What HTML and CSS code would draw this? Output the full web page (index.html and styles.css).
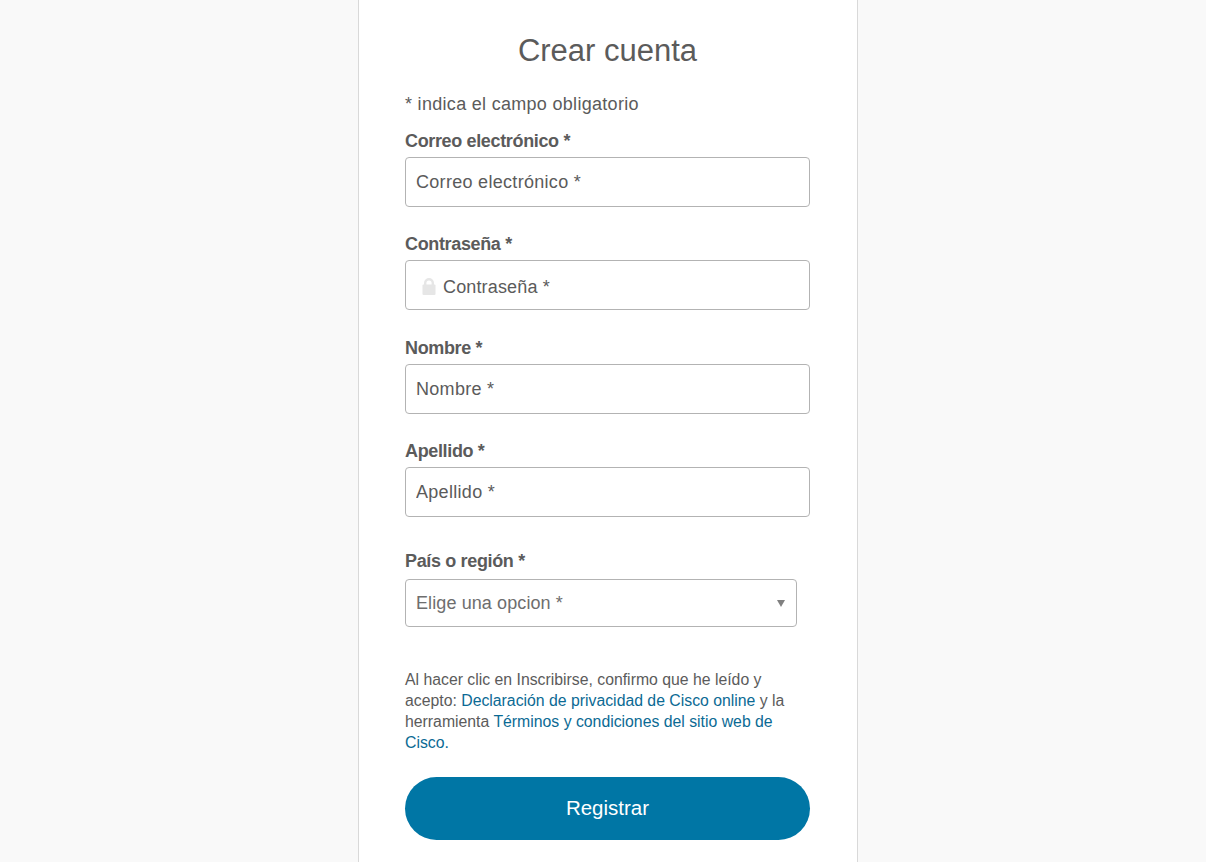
FILE: index.html
```html
<!DOCTYPE html>
<html lang="es">
<head>
    <meta charset="UTF-8">
    <meta name="viewport" content="width=device-width, initial-scale=1.0">
    <title>Crear cuenta</title>
    <link rel="stylesheet" href="styles.css">
</head>
<body>
    <main class="card">
        <h1 class="title">Crear cuenta</h1>
        <p class="hint">* indica el campo obligatorio</p>
        <form class="signup">
            <div class="field">
                <label class="label" for="email">Correo electrónico *</label>
                <input class="input" type="text" id="email" placeholder="Correo electrónico *">
            </div>
            <div class="field">
                <label class="label" for="password">Contraseña *</label>
                <div class="input-wrap">
                    <svg class="lock" width="14" height="17" viewBox="0 0 14 17" aria-hidden="true">
                        <path d="M3.2 7V5a3.8 3.8 0 0 1 7.6 0v2" fill="none" stroke="#e6e6e6" stroke-width="2.4"/>
                        <rect x="0.5" y="6.5" width="13" height="10.5" rx="1" fill="#e6e6e6"/>
                    </svg>
                    <input class="input input-lock" type="password" id="password" placeholder="Contraseña *">
                </div>
            </div>
            <div class="field">
                <label class="label" for="first">Nombre *</label>
                <input class="input input-low" type="text" id="first" placeholder="Nombre *">
            </div>
            <div class="field">
                <label class="label" for="last">Apellido *</label>
                <input class="input input-low" type="text" id="last" placeholder="Apellido *">
            </div>
            <div class="field field-country">
                <label class="label" for="country">País o región *</label>
                <div class="select-wrap">
                    <select class="select" id="country">
                        <option>Elige una opcion *</option>
                    </select>
                    <span class="arrow"></span>
                </div>
            </div>
            <p class="legal">Al hacer clic en Inscribirse, confirmo que he leído y acepto: <a href="#">Declaración de privacidad de Cisco online</a> y la herramienta <a href="#">Términos y condiciones del sitio web de Cisco.</a></p>
            <button class="submit" type="button">Registrar</button>
        </form>
    </main>
</body>
</html>
```

FILE: styles.css
```css
* {
    box-sizing: border-box;
}
html, body {
    height: 100%;
    overflow: hidden;
}
body {
    margin: 0;
    background-color: #f9f9f9;
    color: #5b5b5b;
    font-family: "Liberation Sans", Arial, sans-serif;
}
.card {
    width: 500px;
    height: 100%;
    margin-left: 358px;
    padding: 0 47px 0 46px;
    background-color: #fff;
    border-left: 1px solid #d9d9d9;
    border-right: 1px solid #d9d9d9;
}
.title {
    margin: 0;
    padding-top: 33px;
    font-size: 31px;
    line-height: 35px;
    font-weight: 400;
    text-align: center;
}
.hint {
    margin: 26px 0 0;
    font-size: 18px;
    line-height: 20px;
    letter-spacing: 0.3px;
}
.signup {
    margin-top: 17px;
}
.field {
    margin-bottom: 27.33px;
}
.label {
    display: block;
    font-size: 18px;
    font-weight: 700;
    line-height: 20px;
    letter-spacing: -0.35px;
    margin-bottom: 6px;
}
.input {
    display: block;
    width: 100%;
    height: 50px;
    padding: 0 10px;
    border: 1px solid #b3b3b3;
    border-radius: 4px;
    background-color: #fff;
    color: #5b5b5b;
    font-family: inherit;
    font-size: 18px;
    letter-spacing: 0.3px;
}
.input::placeholder {
    color: #5b5b5b;
    opacity: 1;
}
.input-low {
    padding-top: 2px;
}
.input-wrap, .select-wrap {
    position: relative;
}
.input-lock {
    padding-left: 37px;
    padding-top: 4px;
    letter-spacing: 0.15px;
}
.lock {
    position: absolute;
    left: 17px;
    top: 18px;
}
.field-country {
    margin-top: 34px;
    margin-bottom: 42px;
}
.field-country .label {
    margin-bottom: 8px;
}
.select-wrap {
    width: 392px;
}
.select {
    display: block;
    width: 100%;
    height: 48px;
    padding: 0 10px;
    border: 1px solid #b3b3b3;
    border-radius: 4px;
    background-color: #fff;
    color: #6e6e6e;
    font-family: inherit;
    font-size: 18px;
    letter-spacing: 0.1px;
    appearance: none;
}
.arrow {
    position: absolute;
    right: 12px;
    top: 21px;
    border-left: 4px solid transparent;
    border-right: 4px solid transparent;
    border-top: 7px solid #808080;
}
.legal {
    margin: 0 0 24px;
    font-size: 15.8px;
    line-height: 21px;
}
.legal a {
    color: #0b6a94;
    text-decoration: none;
}
.submit {
    display: block;
    width: 100%;
    height: 63px;
    border: none;
    border-radius: 32px;
    background-color: #0076a5;
    color: #fff;
    font-family: inherit;
    font-size: 20.5px;
}
```
